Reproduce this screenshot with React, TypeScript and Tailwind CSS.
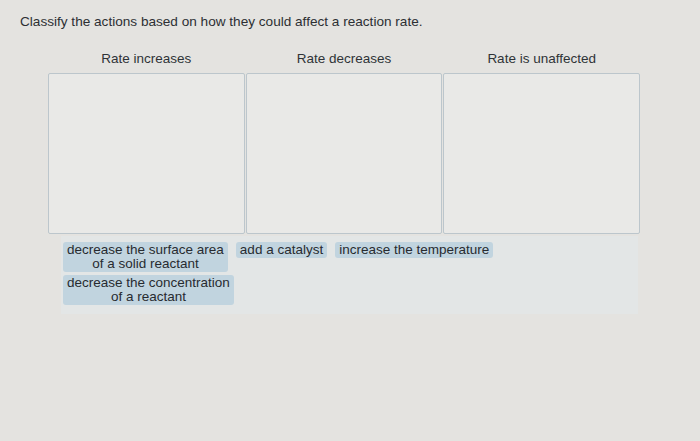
import React from "react";

const columns = ["Rate increases", "Rate decreases", "Rate is unaffected"];

const chips: string[][] = [
  ["decrease the surface area", "of a solid reactant"],
  ["add a catalyst"],
  ["increase the temperature"],
  ["decrease the concentration", "of a reactant"],
];

function Chip({ lines }: { lines: string[] }) {
  return (
    <div className="self-start whitespace-nowrap rounded-[3px] bg-[#c1d4df] px-[4px] py-[1px] text-center text-[13.5px] leading-[14px] text-[#272b30]">
      {lines.map((l) => (
        <div key={l}>{l}</div>
      ))}
    </div>
  );
}

export default function App() {
  return (
    <div
      className="h-[441px] w-[700px] overflow-hidden bg-[#e4e3e0] pt-[12px]"
      style={{ fontFamily: '"Liberation Sans", Arial, sans-serif' }}
    >
      <p className="pl-[20px] text-[13.6px] text-[#2c2f33]">
        Classify the actions based on how they could affect a reaction rate.
      </p>

      <div className="ml-[48px] mt-[17px] w-[592px]">
        <div className="grid grid-cols-3 gap-[1px]">
          {columns.map((c) => (
            <div key={c} className="flex flex-col">
              <div className="pb-[3px] text-center text-[13.5px] text-[#2f3337]">{c}</div>
              <div className="h-[161px] rounded-[2px] border border-[#bcc6cc] bg-[#e9e9e7]" />
            </div>
          ))}
        </div>

        <div className="ml-[13px] mr-[2px] mt-[2px] flex h-[78px] flex-col gap-[3px] bg-[#e3e6e6] px-[2px] pt-[6px]">
          <div className="flex items-start gap-[8px]">
            <Chip lines={chips[0]} />
            <Chip lines={chips[1]} />
            <Chip lines={chips[2]} />
          </div>
          <Chip lines={chips[3]} />
        </div>
      </div>
    </div>
  );
}
